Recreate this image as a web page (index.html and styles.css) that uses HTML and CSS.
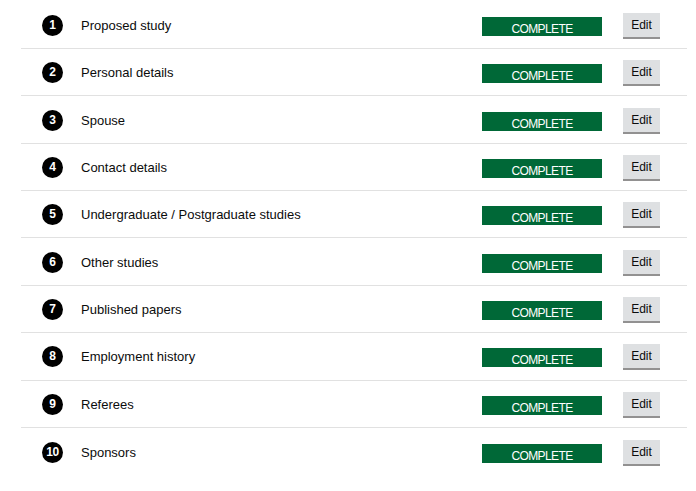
FILE: index.html
```html
<!DOCTYPE html>
<html lang="en">
<head>
<meta charset="utf-8">
<title>Application sections</title>
<link rel="stylesheet" href="styles.css">
</head>
<body>
<ol class="tasks">
  <li class="task"><span class="num">1</span><span class="name">Proposed study</span><span class="tag">COMPLETE</span><button class="edit">Edit</button></li>
  <li class="task"><span class="num">2</span><span class="name">Personal details</span><span class="tag">COMPLETE</span><button class="edit">Edit</button></li>
  <li class="task"><span class="num">3</span><span class="name">Spouse</span><span class="tag">COMPLETE</span><button class="edit">Edit</button></li>
  <li class="task"><span class="num">4</span><span class="name">Contact details</span><span class="tag">COMPLETE</span><button class="edit">Edit</button></li>
  <li class="task"><span class="num">5</span><span class="name">Undergraduate / Postgraduate studies</span><span class="tag">COMPLETE</span><button class="edit">Edit</button></li>
  <li class="task"><span class="num">6</span><span class="name">Other studies</span><span class="tag">COMPLETE</span><button class="edit">Edit</button></li>
  <li class="task"><span class="num">7</span><span class="name">Published papers</span><span class="tag">COMPLETE</span><button class="edit">Edit</button></li>
  <li class="task"><span class="num">8</span><span class="name">Employment history</span><span class="tag">COMPLETE</span><button class="edit">Edit</button></li>
  <li class="task"><span class="num">9</span><span class="name">Referees</span><span class="tag">COMPLETE</span><button class="edit">Edit</button></li>
  <li class="task last"><span class="num">10</span><span class="name">Sponsors</span><span class="tag">COMPLETE</span><button class="edit">Edit</button></li>
</ol>
</body>
</html>
```
FILE: styles.css
```css
html, body {
  margin: 0;
  padding: 0;
  background: #ffffff;
}
body {
  font-family: "Liberation Sans", Arial, sans-serif;
  color: #0b0c0c;
}
.tasks {
  list-style: none;
  margin: 0 0 0 21px;
  padding: 1.6px 0 0 0;
  width: 666px;
}
.task {
  display: grid;
  grid-template-columns: 21px 1fr 120px 37px;
  column-gap: 18px;
  align-items: center;
  height: 47.375px;
  box-sizing: border-box;
  padding: 0 27px 0 21px;
  border-bottom: 1px solid #e1e1e1;
}
.task.last {
  border-bottom: none;
}
.num {
  width: 21px;
  height: 21px;
  border-radius: 50%;
  background: #000000;
  color: #ffffff;
  font-weight: bold;
  font-size: 12px;
  line-height: 21px;
  text-align: center;
  letter-spacing: -0.3px;
  margin-top: 1px;
}
.name {
  font-size: 13px;
  line-height: 16px;
  margin-top: 2px;
}
.tag {
  justify-self: end;
  margin-right: 3px;
  width: 120px;
  height: 19px;
  box-sizing: border-box;
  padding-top: 6px;
  background: #006837;
  color: #ffffff;
  font-size: 12px;
  line-height: 12px;
  letter-spacing: -0.6px;
  text-align: center;
  margin-top: 3px;
}
.edit {
  width: 37px;
  height: 24px;
  margin: 0;
  padding: 0;
  border: none;
  border-radius: 0;
  background: #dee0e2;
  box-shadow: 0 2px 0 #929191;
  color: #0b0c0c;
  font-family: "Liberation Sans", Arial, sans-serif;
  font-size: 12px;
  line-height: 24px;
  margin-top: 0;
}
```
